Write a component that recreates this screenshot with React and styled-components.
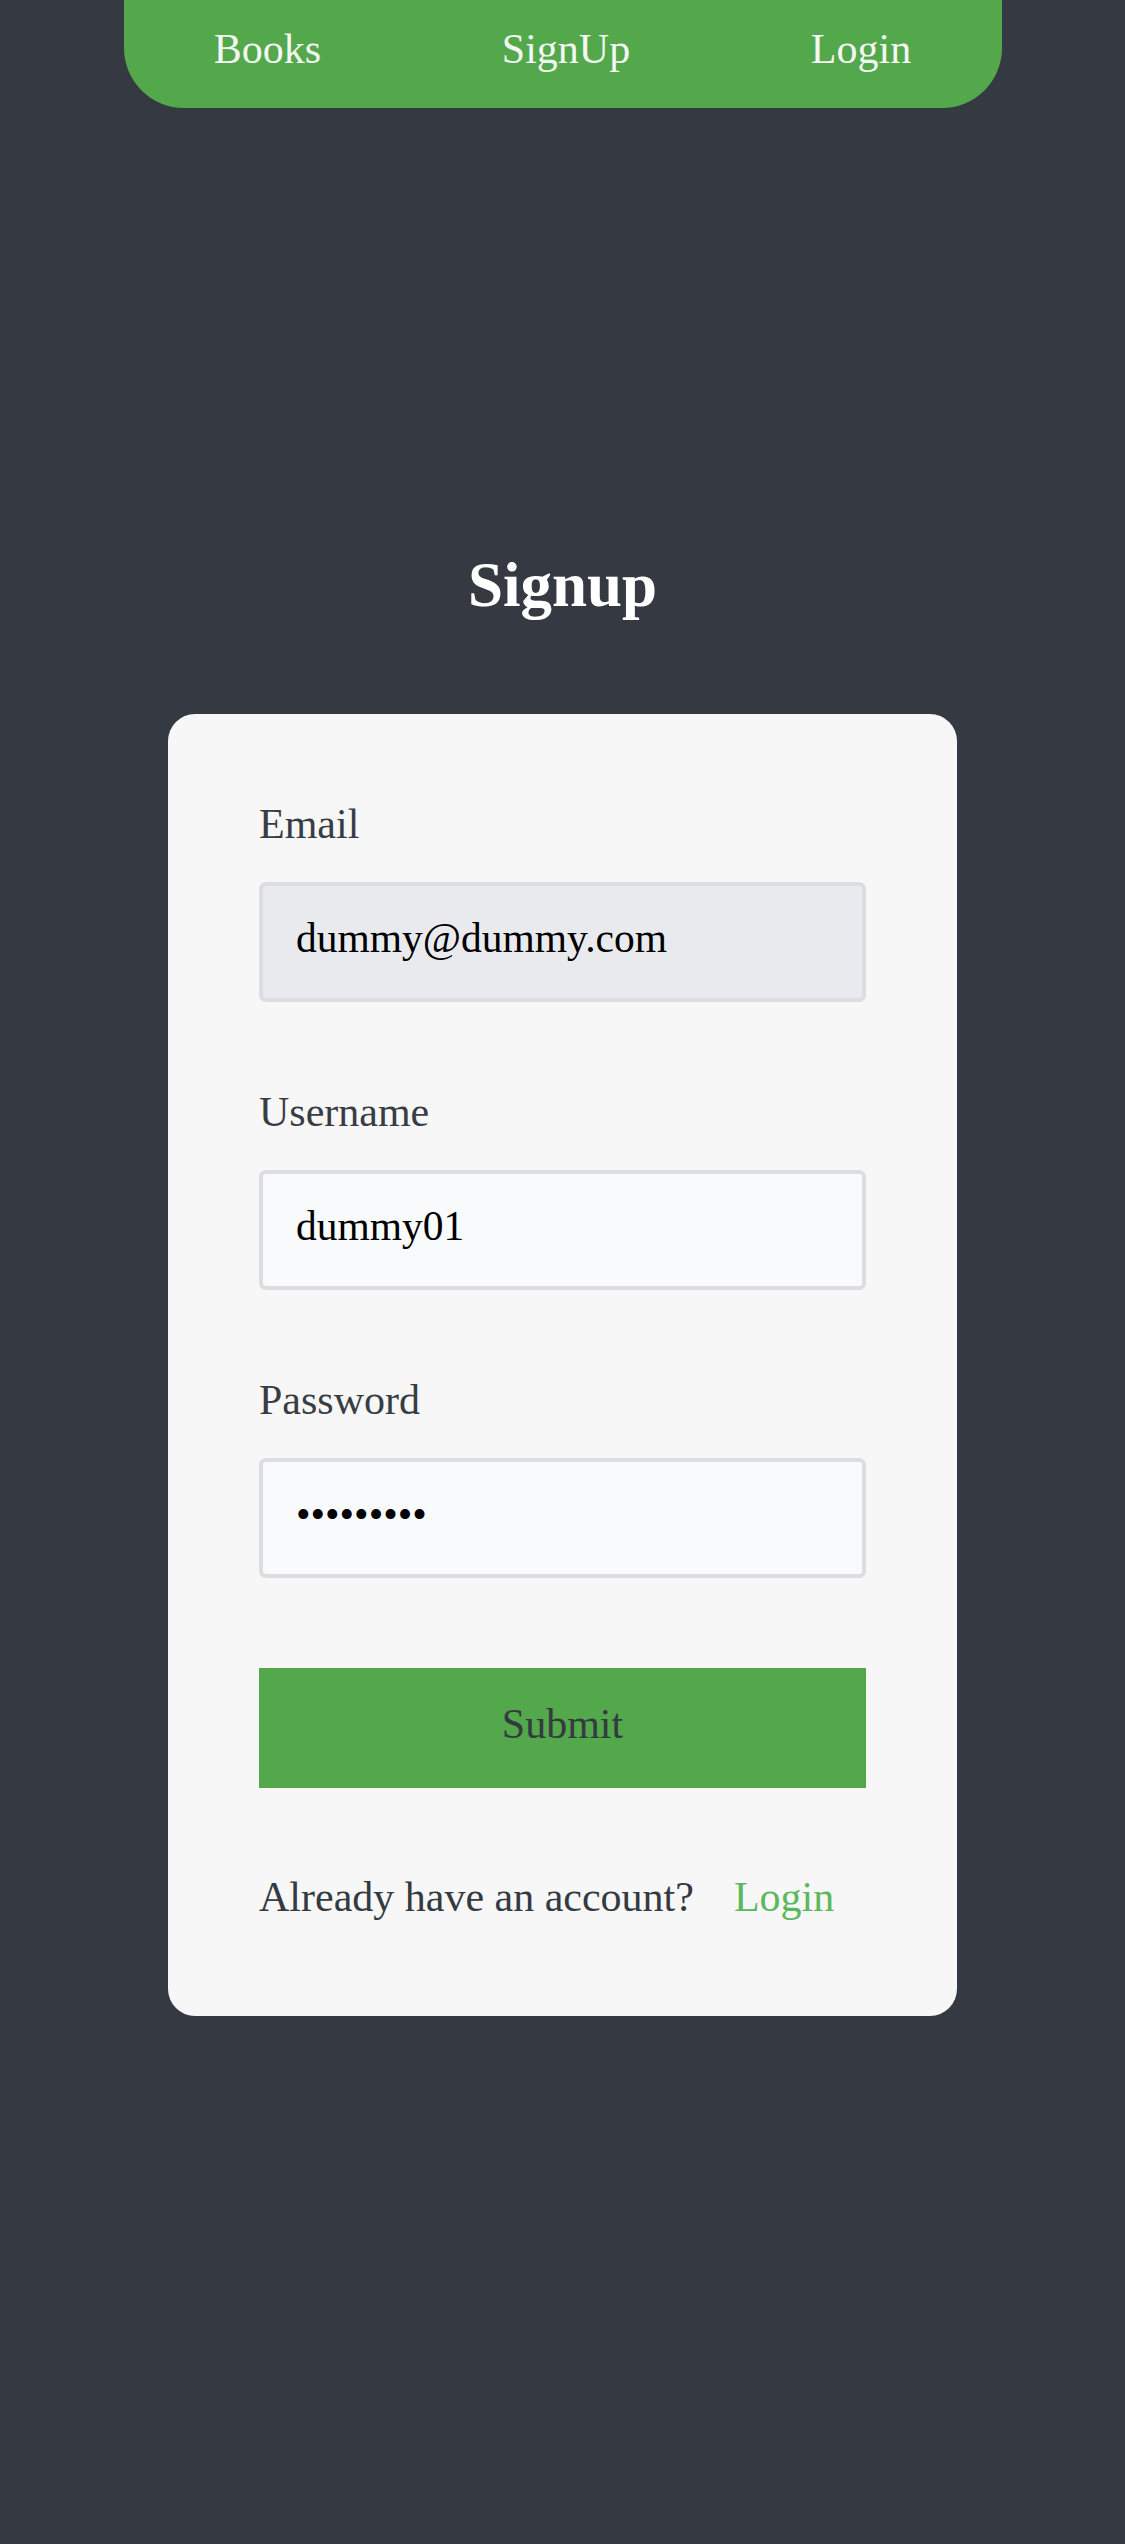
import React from 'react';
import styled, { createGlobalStyle } from 'styled-components';

const GlobalStyle = createGlobalStyle`
  html, body {
    margin: 0;
    padding: 0;
    background: #353a42;
    font-family: "Liberation Serif", "Times New Roman", serif;
  }
  #root {
    min-height: 2544px;
  }
`;

const Page = styled.div`
  min-height: 2544px;
  background: #353a42;
  display: flex;
  flex-direction: column;
  align-items: center;
`;

const NavBar = styled.nav`
  width: 878px;
  box-sizing: border-box;
  background: #52a84a;
  border-radius: 0 0 60px 60px;
  padding: 25px 0 35px;
  display: flex;
  justify-content: space-around;
`;

const NavLink = styled.a`
  color: #f4f6f4;
  font-size: 42px;
  line-height: 48px;
  text-decoration: none;
  cursor: pointer;
`;

const Title = styled.h2`
  margin: 441px 0 0;
  color: #ffffff;
  font-size: 63px;
  line-height: 72px;
  font-weight: bold;
  text-align: center;
`;

const Card = styled.form`
  margin-top: 93px;
  width: 789px;
  box-sizing: border-box;
  background: #f7f7f7;
  border-radius: 27px;
  padding: 86px 91px 95px;
  display: flex;
  flex-direction: column;
`;

const Field = styled.div`
  display: flex;
  flex-direction: column;
  margin-bottom: ${(p) => (p.$last ? '90px' : '86px')};
`;

const Label = styled.label`
  color: #383d45;
  font-size: 42px;
  line-height: 48px;
  margin-bottom: 34px;
`;

const Input = styled.input`
  height: 120px;
  box-sizing: border-box;
  border: 4px solid #dcdde2;
  border-radius: 7px;
  padding: 0 33px 9px;
  font-family: inherit;
  font-size: 41.5px;
  color: #000000;
  background: ${(p) => (p.$filled ? '#e9eaee' : '#f9fafc')};
  outline: none;
`;

const SubmitButton = styled.button`
  height: 120px;
  border: none;
  border-radius: 0;
  background: #52a84a;
  color: #343a40;
  font-family: inherit;
  font-size: 42px;
  padding: 0 0 8px;
  cursor: pointer;
`;

const FooterRow = styled.div`
  margin-top: 85px;
  display: flex;
  gap: 40px;
  font-size: 42px;
  line-height: 48px;
  color: #343a42;
`;

const LoginLink = styled.a`
  color: #5cb85c;
  text-decoration: none;
  cursor: pointer;
`;

export default function App() {
  return (
    <>
      <GlobalStyle />
      <Page>
        <NavBar>
          <NavLink>Books</NavLink>
          <NavLink>SignUp</NavLink>
          <NavLink>Login</NavLink>
        </NavBar>
        <Title>Signup</Title>
        <Card onSubmit={(e) => e.preventDefault()}>
          <Field>
            <Label htmlFor="email">Email</Label>
            <Input id="email" type="email" $filled defaultValue="dummy@dummy.com" />
          </Field>
          <Field>
            <Label htmlFor="username">Username</Label>
            <Input id="username" type="text" defaultValue="dummy01" />
          </Field>
          <Field $last>
            <Label htmlFor="password">Password</Label>
            <Input id="password" type="password" defaultValue="dummy1234" />
          </Field>
          <SubmitButton type="submit">Submit</SubmitButton>
          <FooterRow>
            <span>Already have an account?</span>
            <LoginLink>Login</LoginLink>
          </FooterRow>
        </Card>
      </Page>
    </>
  );
}
